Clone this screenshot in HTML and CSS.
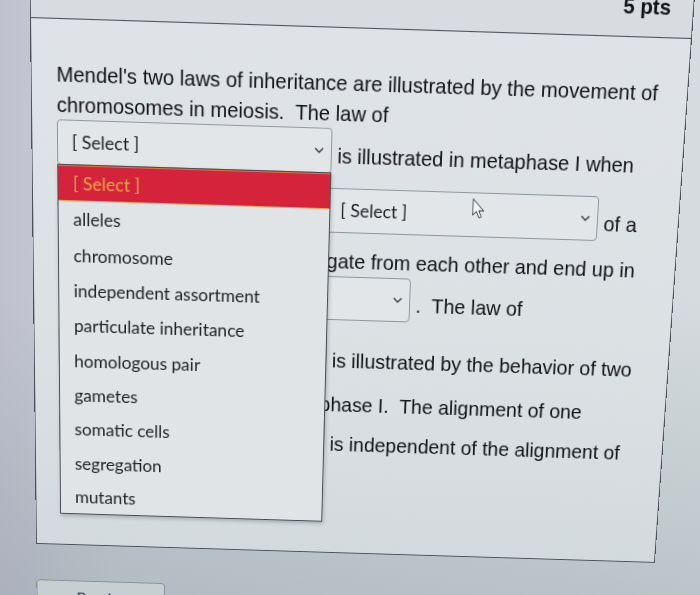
FILE: index.html
```html
<!DOCTYPE html>
<html lang="en">
<head>
<meta charset="utf-8">
<title>Quiz question</title>
<link rel="stylesheet" href="styles.css">
</head>
<body>
<div class="stage">
  <section class="question">
    <header class="question-header">
      <span class="question-points">5 pts</span>
    </header>
    <div class="question-body">
      <p class="question-text">
        Mendel's two laws of inheritance are illustrated by the movement of<br>
        chromosomes in meiosis.&nbsp; The law of<br>
        <span class="select is-open">
          <span class="select-value">[ Select ]</span>
          <svg class="chevron" viewBox="0 0 10 6"><polyline points="1,1 5,5 9,1"/></svg>
          <span class="options">
            <span class="option is-active">[ Select ]</span>
            <span class="option">alleles</span>
            <span class="option">chromosome</span>
            <span class="option">independent assortment</span>
            <span class="option">particulate inheritance</span>
            <span class="option">homologous pair</span>
            <span class="option">gametes</span>
            <span class="option">somatic cells</span>
            <span class="option">segregation</span>
            <span class="option">mutants</span>
          </span>
        </span> is illustrated in metaphase I when<br>
        the homologous pairs bearing <span class="select"><span class="select-value">[ Select ]</span><svg class="chevron" viewBox="0 0 10 6"><polyline points="1,1 5,5 9,1"/></svg></span> of a<br>
        gene line up then alleles segregate from each other and end up in<br>
        separate <span class="select"><span class="select-value">[ Select ]</span><svg class="chevron" viewBox="0 0 10 6"><polyline points="1,1 5,5 9,1"/></svg></span> .&nbsp; The law of<br>
        <span class="select"><span class="select-value">[ Select ]</span><svg class="chevron" viewBox="0 0 10 6"><polyline points="1,1 5,5 9,1"/></svg></span> is illustrated by the behavior of two<br>
        pairs of chromosomes in metaphase I.&nbsp; The alignment of one<br>
        <span class="select"><span class="select-value">[ Select ]</span><svg class="chevron" viewBox="0 0 10 6"><polyline points="1,1 5,5 9,1"/></svg></span> is independent of the alignment of<br>
        any other pair.
      </p>
    </div>
  </section>
  <div class="nav">
    <button class="btn" type="button">Previous</button>
  </div>
  <svg class="cursor" viewBox="0 0 12 19"><path d="M0.5 0.5 L0.5 15.5 L4 12.2 L6.6 18 L8.8 17 L6.3 11.4 L11 11.4 Z"/></svg>
</div>
</body>
</html>
```
FILE: styles.css
```css
html, body {
  margin: 0;
  height: 100%;
  overflow: hidden;
}

body {
  background:
    linear-gradient(180deg, rgba(255, 255, 255, 0) 50%, rgba(95, 118, 122, 0.22) 100%),
    linear-gradient(90deg, #c0c1cf 0%, #c9cfd6 16%, #d0d6db 60%, #d5dbde 100%);
  font-family: "Liberation Sans", Arial, sans-serif;
  color: #111215;
}

/* the whole sheet, seen slightly from the side */
.stage {
  position: relative;
  width: 662px;
  transform-origin: 0 0;
  transform: matrix3d(1.001357, 0.031797, 0, 0.0000019601,
                      0.016197, 1.071796, 0, 0.000132467,
                      0, 0, 1, 0,
                      29.2549, -32.3026, 0, 0.9939065);
}

.question {
  border: 1px solid #4c5258;
  box-sizing: border-box;
  width: 662px;
}

.question-header {
  display: flex;
  justify-content: flex-end;
  box-sizing: border-box;
  height: 46px;
  padding: 7px 22px 0 25px;
  font-size: 20.4px;
  line-height: 20px;
  font-weight: bold;
  background: #d8dce1;
  border-bottom: 1px solid #4c5258;
}

.question-body {
  padding: 38px 25px 54px;
  background: linear-gradient(180deg, #dfe3e7 0%, #dce1e4 55%, #d3dadd 100%);
}

.question-text {
  margin: 0;
  font-size: 20.4px;
  line-height: 28.6px;
  white-space: nowrap;
}

/* dropdown boxes */
.select {
  position: relative;
  display: inline-flex;
  align-items: center;
  justify-content: space-between;
  box-sizing: border-box;
  width: 279px;
  height: 44px;
  padding: 0 7px 0 14px;
  margin-bottom: 14px;
  vertical-align: 6px;
  border: 1px solid #8f979d;
  border-radius: 4px;
  background: #e2e6e9;
  font-family: Lato, "Liberation Sans", sans-serif;
  font-size: 18px;
  line-height: 21.6px;
  color: #1c1e22;
}

.chevron {
  width: 10px;
  height: 6px;
  fill: none;
  stroke: #26282c;
  stroke-width: 1.2;
}

/* open option list of the first dropdown */
.options {
  position: absolute;
  top: 100%;
  left: -1px;
  right: -1px;
  z-index: 2;
  display: flex;
  flex-direction: column;
  border: 1px solid #474d53;
  background: #e0e4e7;
  box-shadow: 1px 2px 4px rgba(0, 0, 0, 0.22);
}

.option {
  height: 35.3px;
  line-height: 35.3px;
  padding: 0 15px;
  color: #1f2124;
}

.option.is-active {
  background: #d4233b;
  color: #f3aa42;
  box-shadow: inset 0 1px 0 #e0743a, inset 0 -1px 0 #e9a55a;
}

.nav {
  margin-top: 38px;
}

.btn {
  box-sizing: border-box;
  width: 138px;
  height: 40px;
  padding: 0 0 0 42px;
  text-align: left;
  border: 1px solid #879095;
  border-radius: 4px;
  background: #c8cfd2;
  font-family: Lato, "Liberation Sans", sans-serif;
  font-size: 17px;
  color: #2d3b45;
}

.cursor {
  position: absolute;
  left: 450px;
  top: 206px;
  width: 13px;
  height: 20px;
  z-index: 3;
  fill: #f4f6f7;
  stroke: #3a3d42;
  stroke-width: 0.8;
  stroke-linejoin: round;
}
```
